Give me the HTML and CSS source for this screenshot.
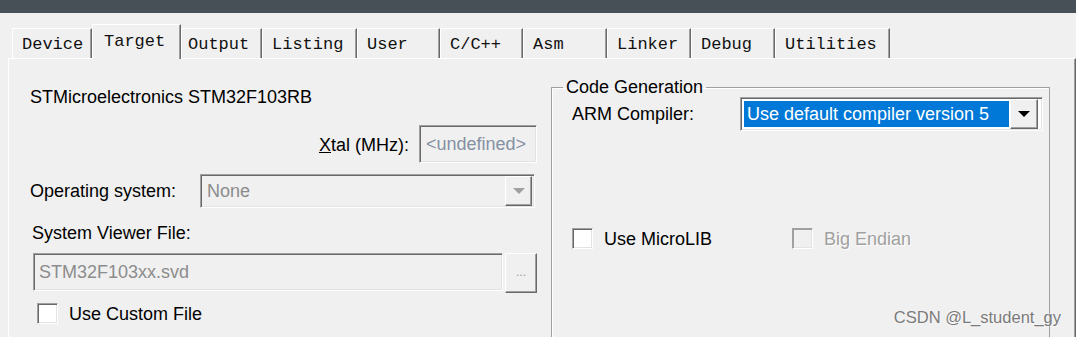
FILE: index.html
```html
<html>
    <head>
        <title>Options for Target</title>
        <link rel="stylesheet" href="styles.css">
    </head>
    <body>
        <!-- mørk kant øverst -->
        <div class="titlebar"></div>

        <!-- fanene -->
        <div class="tabs">
            <div class="tab">Device</div>
            <div class="tab active">Target</div>
            <div class="tab">Output</div>
            <div class="tab">Listing</div>
            <div class="tab">User</div>
            <div class="tab">C/C++</div>
            <div class="tab">Asm</div>
            <div class="tab">Linker</div>
            <div class="tab">Debug</div>
            <div class="tab">Utilities</div>
        </div>

        <div class="panel">
            <!-- venstre kolonne -->
            <div class="left">
                <div class="device-name">STMicroelectronics STM32F103RB</div>

                <div class="xtal-row">
                    <span class="label"><u>X</u>tal (MHz):</span>
                    <div class="field xtal">&lt;undefined&gt;</div>
                </div>

                <div class="os-row">
                    <span class="label os-label">Operating system:</span>
                    <div class="field combo os">
                        <span class="combo-text">None</span>
                        <span class="drop-btn"><span class="arrow grey"></span></span>
                    </div>
                </div>

                <div class="label svd-label">System Viewer File:</div>
                <div class="svd-row">
                    <div class="field svd">STM32F103xx.svd</div>
                    <div class="dots-btn">...</div>
                </div>

                <div class="check-row custom">
                    <span class="box"></span>
                    <span class="label">Use Custom File</span>
                </div>
            </div>

            <!-- høyre kolonne -->
            <div class="right">
                <fieldset class="group">
                    <legend>Code Generation</legend>
                    <div class="compiler-row">
                        <span class="label compiler-label">ARM Compiler:</span>
                        <div class="field combo compiler">
                            <span class="selected">Use default compiler version 5</span>
                            <span class="drop-btn"><span class="arrow"></span></span>
                        </div>
                    </div>
                    <div class="checks">
                        <div class="check-row microlib">
                            <span class="box"></span>
                            <span class="label">Use MicroLIB</span>
                        </div>
                        <div class="check-row">
                            <span class="box disabled"></span>
                            <span class="label disabled-text">Big Endian</span>
                        </div>
                    </div>
                </fieldset>
            </div>
        </div>

        <div class="watermark">CSDN @L_student_gy</div>
    </body>
</html>
```

FILE: styles.css
```css
/* Grunnoppsett */
body {
    margin: 0;
    height: 337px;
    overflow: hidden;
    background-color: #f0f0f0;
    font-family: "Liberation Sans", Arial, sans-serif;
    font-size: 18px;
    color: #000;
    position: relative;
}

.titlebar {
    height: 13px;
    background-color: #474f57;
}

/* Fanene */
.tabs {
    display: flex;
    align-items: flex-end;
    height: 34px;
    margin-top: 11px;
    padding-left: 12px;
    font-family: "Liberation Mono", "Courier New", monospace;
    font-size: 17px;
}
.tab {
    box-sizing: border-box;
    height: 30px;
    display: flex;
    align-items: center;
    padding-left: 9px;
    padding-top: 2px;
    border-top: 1px solid #fff;
    border-left: 1px solid #fff;
    border-right: 1px solid #696969;
    box-shadow: inset -1px 0 #a0a0a0;
    color: #111;
}
.tab:nth-child(1) { width: 80px; }
.tab:nth-child(2) { width: 89px; }
.tab:nth-child(3) { width: 81px; padding-left: 6px; }
.tab:nth-child(4) { width: 95px; }
.tab:nth-child(5) { width: 83px; }
.tab:nth-child(6) { width: 83px; }
.tab:nth-child(7) { width: 84px; }
.tab:nth-child(8) { width: 84px; }
.tab:nth-child(9) { width: 84px; }
.tab:nth-child(10) { width: 115px; }
.tab.active {
    height: 35px;
    margin-bottom: -1px;
    padding-left: 11px;
    padding-bottom: 4px;
    background-color: #f0f0f0;
    position: relative;
    z-index: 1;
}

/* Selve panelet */
.panel {
    box-sizing: border-box;
    margin-left: 8px;
    width: 1068px;
    height: 279px;
    overflow: hidden;
    border-top: 1px solid #fff;
    border-left: 1px solid #fff;
    border-right: 1px solid #696969;
    box-shadow: inset -1px 0 #a0a0a0;
    display: grid;
    grid-template-columns: 542px 1fr;
}

/* Felles for felt og knapper */
.field {
    box-sizing: border-box;
    border: 1px solid;
    border-color: #a0a0a0 #fff #fff #a0a0a0;
    box-shadow: inset 1px 1px #696969, inset -1px -1px #e3e3e3;
    color: #8c8c8c;
    display: flex;
    align-items: center;
}
.drop-btn, .dots-btn, .box {
    box-sizing: border-box;
}
.drop-btn {
    display: flex;
    align-items: center;
    justify-content: center;
    border: 1px solid;
    border-color: #fff #696969 #696969 #fff;
    box-shadow: inset -1px -1px #a0a0a0;
    background-color: #f0f0f0;
}
.arrow {
    width: 0;
    height: 0;
    border-left: 6px solid transparent;
    border-right: 6px solid transparent;
    border-top: 6px solid #000;
}
.arrow.grey {
    border-top-color: #a0a0a0;
}

/* Venstre kolonne */
.left {
    padding: 0 14px 0 21px;
}
.device-name {
    margin-top: 28px;
    line-height: 20px;
}
.xtal-row {
    margin-top: 18px;
    display: flex;
    justify-content: flex-end;
    align-items: center;
    gap: 10px;
}
.xtal-row .label {
    padding-top: 3px;
}
.xtal {
    width: 118px;
    height: 38px;
    padding-left: 6px;
    color: #8590a3;
}
.os-row {
    margin-top: 11px;
    display: flex;
    align-items: center;
}
.os-label {
    width: 170px;
}
.combo.os {
    width: 335px;
    height: 34px;
    padding: 2px 2px 2px 6px;
    justify-content: space-between;
}
.os .drop-btn {
    width: 27px;
    height: 30px;
}
.svd-label {
    margin-top: 15px;
    margin-left: 2px;
    line-height: 20px;
}
.svd-row {
    margin-top: 10px;
    margin-left: 3px;
    display: flex;
    gap: 2px;
}
.svd {
    width: 470px;
    height: 38px;
    padding-left: 5px;
}
.dots-btn {
    width: 32px;
    height: 40px;
    border: 1px solid;
    border-color: #fff #696969 #696969 #fff;
    box-shadow: inset -1px -1px #a0a0a0;
    color: #9a9a9a;
    font-size: 12px;
    text-align: center;
    line-height: 36px;
}

/* Avkrysningsbokser */
.check-row {
    display: flex;
    align-items: center;
}
.box {
    width: 21px;
    height: 21px;
    margin-right: 11px;
    background-color: #fff;
    border: 1px solid;
    border-color: #a0a0a0 #fff #fff #a0a0a0;
    box-shadow: inset 1px 1px #696969, inset -1px -1px #e3e3e3;
}
.box.disabled {
    background-color: #f0f0f0;
    box-shadow: inset 1px 1px #a0a0a0, inset -1px -1px #e3e3e3;
}
.disabled-text {
    color: #a0a0a0;
    text-shadow: 1px 1px #fff;
}
.custom {
    margin-top: 9px;
    margin-left: 7px;
}
.custom .label {
    padding-top: 2px;
}

/* Høyre kolonne */
.group {
    margin: 18px 0 0 0;
    width: 499px;
    box-sizing: border-box;
    height: 300px;
    padding: 0 0 0 11px;
    border: 1px solid #a0a0a0;
    box-shadow: inset 1px 1px #fff;
}
.group legend {
    padding: 0 3px;
    line-height: 20px;
}
.compiler-row {
    display: flex;
    align-items: center;
    margin-left: 9px;
}
.compiler-label {
    width: 168px;
}
.combo.compiler {
    width: 303px;
    height: 34px;
    padding: 2px;
    background-color: #fff;
}
.selected {
    box-sizing: border-box;
    width: 265px;
    height: 26px;
    margin: 0 1px;
    padding-left: 3px;
    line-height: 26px;
    background-color: #0078d7;
    color: #fff;
}
.compiler .drop-btn {
    width: 28px;
    height: 30px;
}
.checks {
    display: flex;
    margin-top: 96px;
    margin-left: 9px;
}
.checks .label {
    padding-top: 2px;
}
.microlib {
    width: 220px;
}

/* Vannmerket nederst i hjørnet */
.watermark {
    position: absolute;
    right: 15px;
    bottom: 10px;
    font-size: 16.5px;
    color: #7a7a7a;
    text-shadow: 0 0 2px #fff;
}
```
